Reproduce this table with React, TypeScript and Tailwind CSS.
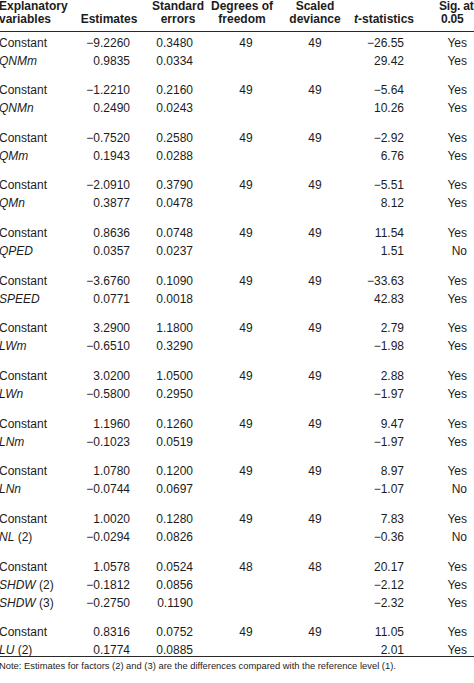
import React from "react";

type Row = { v: React.ReactNode; est: string; se: string; df?: string; dev?: string; t: string; sig: string };

const M = "\u2212";

const groups: Row[][] = [
  [
    { v: "Constant", est: `${M}9.2260`, se: "0.3480", df: "49", dev: "49", t: `${M}26.55`, sig: "Yes" },
    { v: <i>QNMm</i>, est: "0.9835", se: "0.0334", t: "29.42", sig: "Yes" },
  ],
  [
    { v: "Constant", est: `${M}1.2210`, se: "0.2160", df: "49", dev: "49", t: `${M}5.64`, sig: "Yes" },
    { v: <i>QNMn</i>, est: "0.2490", se: "0.0243", t: "10.26", sig: "Yes" },
  ],
  [
    { v: "Constant", est: `${M}0.7520`, se: "0.2580", df: "49", dev: "49", t: `${M}2.92`, sig: "Yes" },
    { v: <i>QMm</i>, est: "0.1943", se: "0.0288", t: "6.76", sig: "Yes" },
  ],
  [
    { v: "Constant", est: `${M}2.0910`, se: "0.3790", df: "49", dev: "49", t: `${M}5.51`, sig: "Yes" },
    { v: <i>QMn</i>, est: "0.3877", se: "0.0478", t: "8.12", sig: "Yes" },
  ],
  [
    { v: "Constant", est: "0.8636", se: "0.0748", df: "49", dev: "49", t: "11.54", sig: "Yes" },
    { v: <i>QPED</i>, est: "0.0357", se: "0.0237", t: "1.51", sig: "No" },
  ],
  [
    { v: "Constant", est: `${M}3.6760`, se: "0.1090", df: "49", dev: "49", t: `${M}33.63`, sig: "Yes" },
    { v: <i>SPEED</i>, est: "0.0771", se: "0.0018", t: "42.83", sig: "Yes" },
  ],
  [
    { v: "Constant", est: "3.2900", se: "1.1800", df: "49", dev: "49", t: "2.79", sig: "Yes" },
    { v: <i>LWm</i>, est: `${M}0.6510`, se: "0.3290", t: `${M}1.98`, sig: "Yes" },
  ],
  [
    { v: "Constant", est: "3.0200", se: "1.0500", df: "49", dev: "49", t: "2.88", sig: "Yes" },
    { v: <i>LWn</i>, est: `${M}0.5800`, se: "0.2950", t: `${M}1.97`, sig: "Yes" },
  ],
  [
    { v: "Constant", est: "1.1960", se: "0.1260", df: "49", dev: "49", t: "9.47", sig: "Yes" },
    { v: <i>LNm</i>, est: `${M}0.1023`, se: "0.0519", t: `${M}1.97`, sig: "Yes" },
  ],
  [
    { v: "Constant", est: "1.0780", se: "0.1200", df: "49", dev: "49", t: "8.97", sig: "Yes" },
    { v: <i>LNn</i>, est: `${M}0.0744`, se: "0.0697", t: `${M}1.07`, sig: "No" },
  ],
  [
    { v: "Constant", est: "1.0020", se: "0.1280", df: "49", dev: "49", t: "7.83", sig: "Yes" },
    { v: <><i>NL</i> (2)</>, est: `${M}0.0294`, se: "0.0826", t: `${M}0.36`, sig: "No" },
  ],
  [
    { v: "Constant", est: "1.0578", se: "0.0524", df: "48", dev: "48", t: "20.17", sig: "Yes" },
    { v: <><i>SHDW</i> (2)</>, est: `${M}0.1812`, se: "0.0856", t: `${M}2.12`, sig: "Yes" },
    { v: <><i>SHDW</i> (3)</>, est: `${M}0.2750`, se: "0.1190", t: `${M}2.32`, sig: "Yes" },
  ],
  [
    { v: "Constant", est: "0.8316", se: "0.0752", df: "49", dev: "49", t: "11.05", sig: "Yes" },
    { v: <><i>LU</i> (2)</>, est: "0.1774", se: "0.0885", t: "2.01", sig: "Yes" },
  ],
];

const cols = "grid grid-cols-[76px_68px_70px_58px_88px_50px_66px]";

function HeadCell({ lines, className = "" }: { lines: React.ReactNode[]; className?: string }) {
  return (
    <div className={`flex flex-col justify-end items-center ${className}`}>
      {lines.map((l, i) => (
        <div key={i} className="whitespace-nowrap">
          {l}
        </div>
      ))}
    </div>
  );
}

export default function App() {
  return (
    <div className="w-[474px] h-[683px] overflow-hidden bg-white text-[#1c1c1c] font-['Liberation_Sans',Arial,sans-serif]">
      <div className="ml-[-1px] w-[475px]">
        <div className={`${cols} text-[12px] leading-[13.4px] font-bold pb-[4.2px] border-b border-[#2a2a2a]`}>
          <div className="flex flex-col whitespace-nowrap">
            <div>Explanatory</div>
            <div>variables</div>
          </div>
          <HeadCell lines={["Estimates"]} />
          <HeadCell lines={["Standard", "errors"]} />
          <HeadCell lines={["Degrees of", "freedom"]} />
          <HeadCell lines={["Scaled", "deviance"]} />
          <HeadCell lines={[<><i>t</i>-statistics</>]} />
          <div className="flex flex-col whitespace-nowrap pl-[30px] tracking-[-0.2px]">
            <div>Sig. at</div>
            <div className="pl-[2px]">0.05</div>
          </div>
        </div>
        <div className="pt-[1.5px] text-[12px] leading-[18px]">
          {groups.map((g, gi) => (
            <div key={gi} className={gi === 0 ? "" : "mt-[11.67px]"}>
              {g.map((r, ri) => (
                <div key={ri} className={`${cols} h-[18px]`}>
                  <div className="whitespace-nowrap">{r.v}</div>
                  <div className="text-right pr-[13px]">{r.est}</div>
                  <div className="text-right pr-[20px]">{r.se}</div>
                  <div className="text-center pl-[8px]">{r.df ?? ""}</div>
                  <div className="text-center">{r.dev ?? ""}</div>
                  <div className="text-right pr-[5px]">{r.t}</div>
                  <div className="text-right pr-[8px]">{r.sig}</div>
                </div>
              ))}
            </div>
          ))}
        </div>
        <div className="mt-[-3px] border-t border-[#2a2a2a]" />
        <div className="pt-[3px] text-[9.4px] leading-[12px] whitespace-nowrap">
          Note: Estimates for factors (2) and (3) are the differences compared with the reference level (1).
        </div>
      </div>
    </div>
  );
}
